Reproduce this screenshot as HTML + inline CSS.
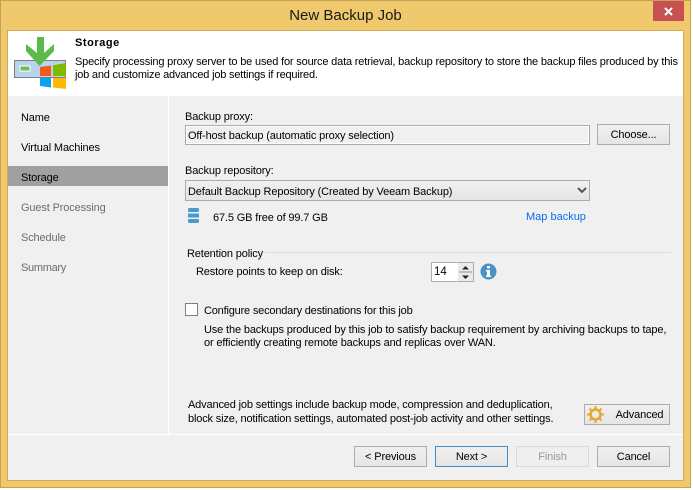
<!DOCTYPE html>
<html><head><meta charset="utf-8">
<style>
html,body{margin:0;padding:0;background:#fff;}
#w{position:relative;width:693px;height:490px;overflow:hidden;background:#fff;font-family:"Liberation Sans",sans-serif;font-size:11px;letter-spacing:-.14px;color:#000;}
#w div{position:absolute;white-space:nowrap;box-sizing:border-box;}
.t{line-height:14px;height:14px;}
.btn{background:linear-gradient(#f0f0f0,#e5e5e5);border:1px solid #acacac;text-align:center;line-height:20px;}
.g{color:#6d6d6d;}
</style></head><body><div id="w">
<div style="left:0;top:0;width:691px;height:488px;background:#f0c96c;border:1px solid #c4a25a;"></div>
<div style="left:8px;top:31px;width:675px;height:449px;background:#f0f0f0;"></div>
<div style="left:7px;top:30px;width:677px;height:1px;background:#cfac60;"></div>
<div style="left:683px;top:30px;width:1px;height:451px;background:#cfac60;"></div>
<div style="left:7px;top:30px;width:1px;height:451px;background:#cfac60;"></div>
<div style="left:7px;top:480px;width:677px;height:1px;background:#cfac60;"></div>
<div class="t" style="left:0;top:7px;width:691px;text-align:center;font-size:15px;letter-spacing:0;line-height:18px;height:18px;color:#1a1a1a;">New Backup Job</div>
<div style="left:653px;top:1px;width:31px;height:20px;background:#c75050;"></div>
<svg style="position:absolute;left:663px;top:6px" width="11" height="11" viewBox="0 0 11 11"><path d="M2 2L9 9M9 2L2 9" stroke="#fff" stroke-width="2"/></svg>
<div style="left:8px;top:31px;width:675px;height:65px;background:#fff;"></div>
<svg style="position:absolute;left:13px;top:36px" width="56" height="56" viewBox="0 0 56 56">
<rect x="1.500" y="24.500" width="51" height="17" fill="#b8d3ec" stroke="#7f7f7f"/>
<rect x="7" y="30" width="10" height="5" fill="#6cbf4b" stroke="#fff"/>
<path d="M24 1H31V17L41 8V15L26.500 30L13 15V8L24 17Z" fill="#5cb94a"/>
<path d="M27 31L38 29.500V40H27Z" fill="#f25a1d"/><path d="M40 29.200L53 27V40H40Z" fill="#7fb900"/>
<path d="M27 42H38V51.500L27 50Z" fill="#08a2ee"/><path d="M40 42H53V53L40 51.500Z" fill="#ffb900"/>
</svg>
<div class="t" style="left:75px;top:36px;font-weight:bold;letter-spacing:.55px;">Storage</div>
<div class="t" style="left:75px;top:55px;width:610px;letter-spacing:-.17px;">Specify processing proxy server to be used for source data retrieval, backup repository to store the backup files produced by this</div>
<div class="t" style="left:75px;top:68px;letter-spacing:-.2px;">job and customize advanced job settings if required.</div>
<div style="left:168px;top:96px;width:1px;height:338px;background:#fff;"></div>
<div style="left:8px;top:166px;width:160px;height:20px;background:#a0a0a0;"></div>
<div class="t" style="left:21px;top:111px;">Name</div>
<div class="t" style="left:21px;top:141px;">Virtual Machines</div>
<div class="t" style="left:21px;top:171px;">Storage</div>
<div class="t g" style="left:21px;top:201px;">Guest Processing</div>
<div class="t g" style="left:21px;top:231px;">Schedule</div>
<div class="t g" style="left:21px;top:261px;letter-spacing:-.3px;">Summary</div>
<div class="t" style="left:185px;top:110px;">Backup proxy:</div>
<div class="t" style="left:185px;top:125px;width:405px;height:20px;background:#f0f0f0;border:1px solid #acacac;box-shadow:inset 0 0 0 1px #fff;padding:3px 0 0 2px;">Off-host backup (automatic proxy selection)</div>
<div class="btn" style="left:597px;top:124px;width:73px;height:21px;">Choose...</div>
<div class="t" style="left:185px;top:164px;">Backup repository:</div>
<div class="t" style="left:185px;top:180px;width:405px;height:21px;background:linear-gradient(#f0f0f0,#e5e5e5);border:1px solid #acacac;padding:4px 0 0 2px;">Default Backup Repository (Created by Veeam Backup)</div>
<svg style="position:absolute;left:577px;top:187px" width="10" height="7" viewBox="0 0 10 7"><path d="M1 1L5 5L9 1" fill="none" stroke="#555" stroke-width="2"/></svg>
<svg style="position:absolute;left:187px;top:207px" width="13" height="17" viewBox="0 0 13 17"><rect x="1" y="1" width="11" height="4" rx="1.500" fill="#4a9ad0"/><rect x="1" y="6.500" width="11" height="4" fill="#4a9ad0"/><rect x="1" y="12" width="11" height="4" rx="1.500" fill="#4a9ad0"/></svg>
<div class="t" style="left:213px;top:211px;">67.5 GB free of 99.7 GB</div>
<div class="t" style="left:526px;top:210px;color:#0a6cf0;letter-spacing:0;">Map backup</div>
<div class="t" style="left:187px;top:247px;">Retention policy</div>
<div style="left:265px;top:252px;width:406px;height:1px;background:#dcdcdc;"></div>
<div class="t" style="left:196px;top:265px;">Restore points to keep on disk:</div>
<div class="t" style="left:431px;top:262px;width:43px;height:20px;background:#fff;border:1px solid #acacac;padding:2px 0 0 2px;font-size:11.500px;letter-spacing:0;">14</div>
<div style="left:458px;top:263px;width:15px;height:18px;background:#eaeaea;"></div>
<div style="left:459px;top:271px;width:13px;height:2px;background:#bdbdbd;"></div>
<svg style="position:absolute;left:461px;top:265px" width="9" height="15" viewBox="0 0 9 15"><path d="M4.500 1L8 4.500H1ZM1 10.500H8L4.500 14Z" fill="#222"/></svg>
<svg style="position:absolute;left:480px;top:263px" width="17" height="17" viewBox="0 0 17 17"><circle cx="8.500" cy="8.500" r="8" fill="#4b93c6"/><rect x="7" y="3" width="3" height="2.500" fill="#fff"/><path d="M6 7H10V12.500H11V14H6V12.500H7V8.500H6Z" fill="#fff"/></svg>
<div style="left:185px;top:303px;width:13px;height:13px;background:#fff;border:1px solid #7f7f7f;"></div>
<div class="t" style="left:204px;top:304px;letter-spacing:-.19px;">Configure secondary destinations for this job</div>
<div class="t" style="left:204px;top:323px;">Use the backups produced by this job to satisfy backup requirement by archiving backups to tape,</div>
<div class="t" style="left:204px;top:336px;">or efficiently creating remote backups and replicas over WAN.</div>
<div class="t" style="left:188px;top:398px;letter-spacing:-.15px;">Advanced job settings include backup mode, compression and deduplication,</div>
<div class="t" style="left:188px;top:412px;letter-spacing:-.16px;">block size, notification settings, automated post-job activity and other settings.</div>
<div class="btn" style="left:584px;top:404px;width:86px;height:21px;padding-left:25px;">Advanced</div>
<svg style="position:absolute;left:587px;top:406px" width="17" height="17" viewBox="0 0 17 17"><circle cx="8.500" cy="8.500" r="5" fill="none" stroke="#e3a82e" stroke-width="2.500"/><path d="M8.500 0V3M8.500 14V17M0 8.500H3M14 8.500H17M2.500 2.500L4.500 4.500M12.500 12.500L14.500 14.500M14.500 2.500L12.500 4.500M4.500 12.500L2.500 14.500" stroke="#e3a82e" stroke-width="2"/></svg>
<div style="left:8px;top:434px;width:675px;height:1px;background:#fff;"></div>
<div class="btn" style="left:354px;top:446px;width:73px;height:21px;">&lt; Previous</div>
<div class="btn" style="left:435px;top:446px;width:73px;height:21px;border-color:#3f8ecb;">Next &gt;</div>
<div class="btn" style="left:516px;top:446px;width:73px;height:21px;background:#efefef;border-color:#d9d9d9;color:#9a9a9a;">Finish</div>
<div class="btn" style="left:597px;top:446px;width:73px;height:21px;">Cancel</div>
</div></body></html>
